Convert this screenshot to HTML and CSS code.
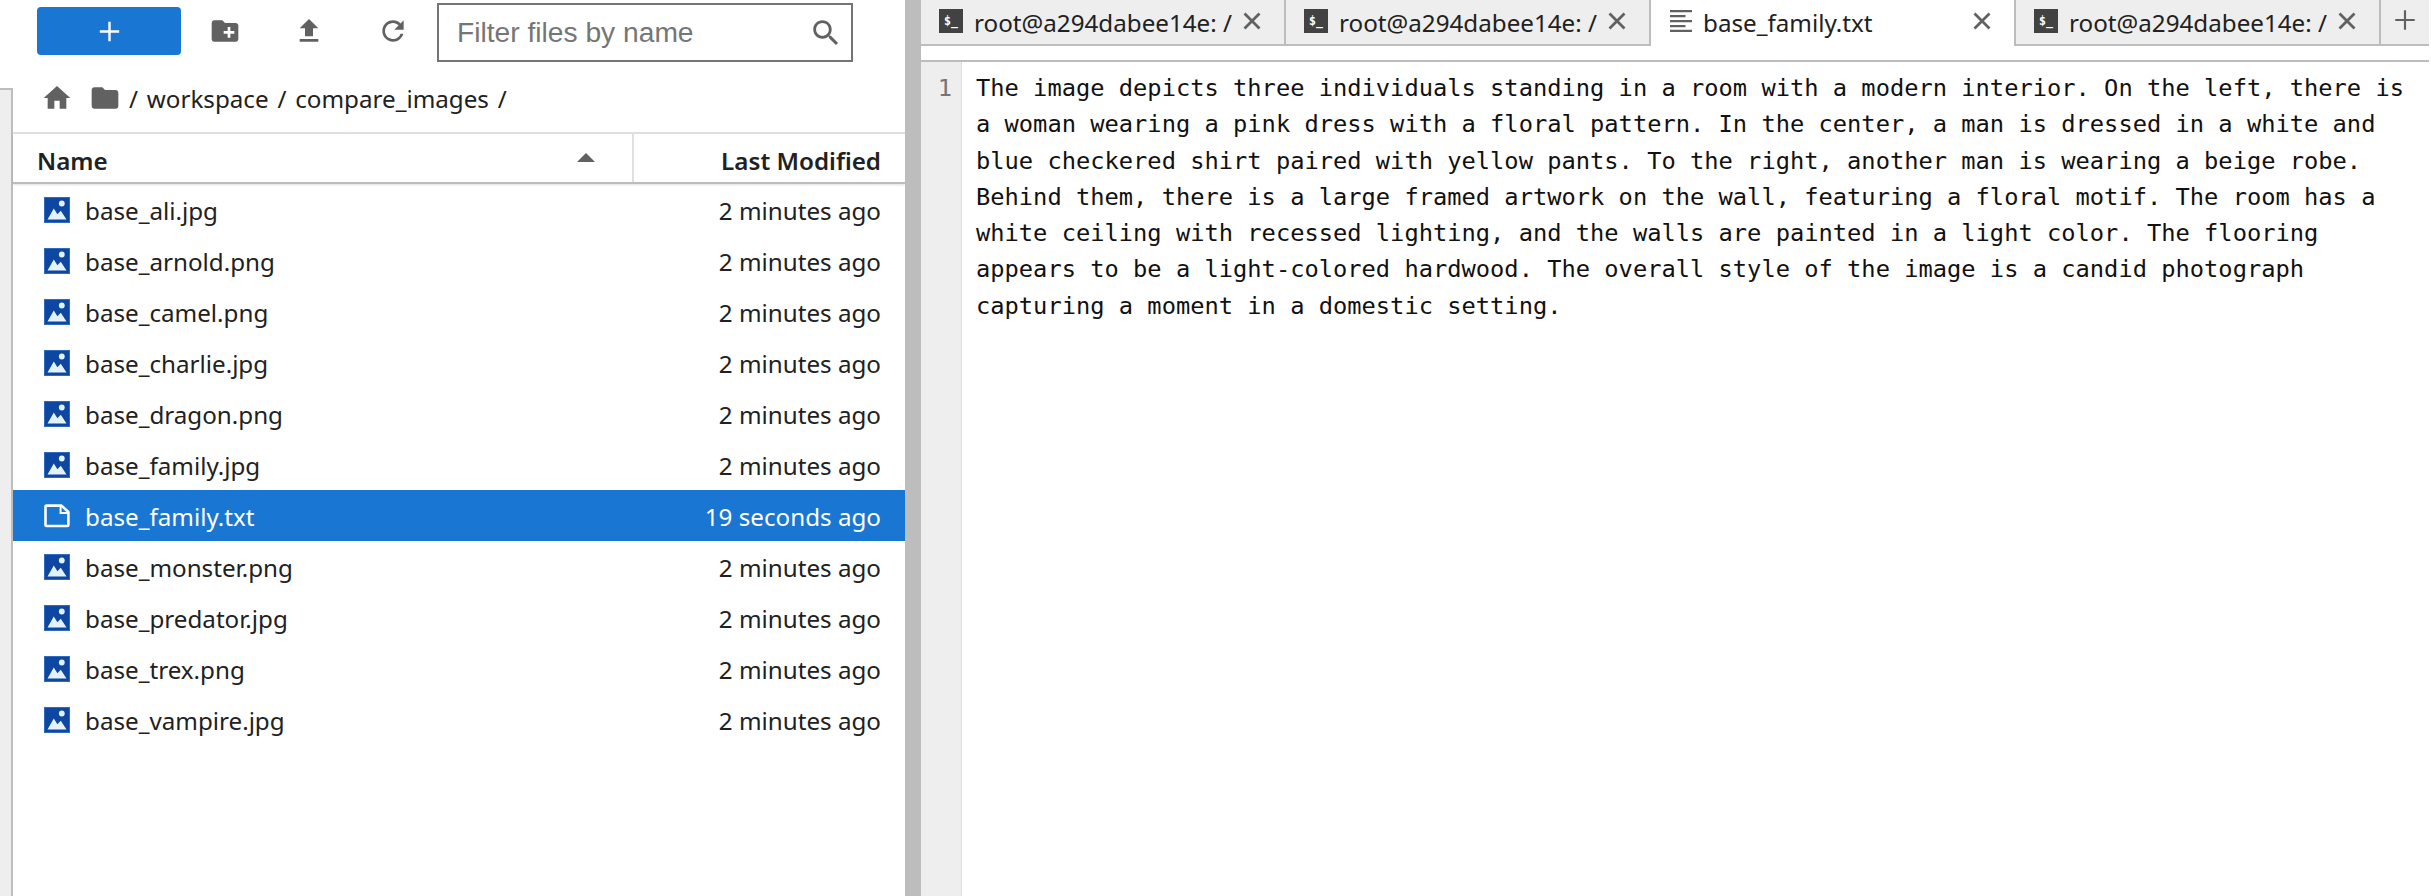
FILE: index.html
```html
<!DOCTYPE html>
<html lang="en">
<head>
  <meta charset="UTF-8" />
  <title>compare_images</title>
  <link rel="stylesheet" href="styles.css">
</head>
<body>
  <svg class="defs" width="0" height="0">
    <symbol id="img-icon" viewBox="0 0 26 26">
      <rect x="0.5" y="0.5" width="25" height="25" fill="#0d47a1" stroke="#2f6cc0"/>
      <circle cx="17.8" cy="6.5" r="2.9" fill="#e3f2fd"/>
      <path fill="#e3f2fd" d="M3.5 22.5 9.8 11.5 13.4 17.2 16.8 13.8 22.5 22.5z"/>
    </symbol>
    <symbol id="close-icon" viewBox="0 0 18 18">
      <path d="M1.5 1.5 16.5 16.5M16.5 1.5 1.5 16.5" stroke="#616161" stroke-width="2.8" fill="none"/>
    </symbol>
  </svg>

  <div class="filebrowser">
    <div class="toolbar">
      <button class="new-btn">
        <svg viewBox="0 0 24 24" width="29" height="29"><path fill="#fff" d="M13 4h-2v7H4v2h7v7h2v-7h7v-2h-7z"/></svg>
      </button>
      <span class="tool"><svg viewBox="0 0 24 24"><path d="M20 6h-8l-2-2H4c-1.11 0-1.99.89-1.99 2L2 18c0 1.11.89 2 2 2h16c1.11 0 2-.89 2-2V8c0-1.11-.89-2-2-2zm-1 8h-3v3h-2v-3h-3v-2h3V9h2v3h3v2z"/></svg></span>
      <span class="tool"><svg viewBox="0 0 24 24"><path d="M9 16h6v-6h4l-7-7-7 7h4zm-4 2h14v2H5z"/></svg></span>
      <span class="tool"><svg viewBox="0 0 24 24"><path d="M17.65 6.35C16.2 4.9 14.21 4 12 4c-4.42 0-7.99 3.58-7.99 8s3.57 8 7.99 8c3.73 0 6.84-2.55 7.73-6h-2.08c-.82 2.33-3.04 4-5.65 4-3.31 0-6-2.69-6-6s2.69-6 6-6c1.66 0 3.14.69 4.22 1.78L13 11h7V4l-2.35 2.35z"/></svg></span>
      <div class="filter">
        <span class="filter-text">Filter files by name</span>
        <svg viewBox="0 0 24 24"><path d="M15.5 14h-.79l-.28-.27C15.41 12.59 16 11.11 16 9.5 16 5.91 13.09 3 9.5 3S3 5.91 3 9.5 5.91 16 9.5 16c1.61 0 3.09-.59 4.23-1.57l.27.28v.79l5 4.99L20.49 19l-4.99-5zm-6 0C7.01 14 5 11.99 5 9.5S7.01 5 9.5 5 14 7.01 14 9.5 11.99 14 9.5 14z"/></svg>
      </div>
    </div>

    <div class="browser-body">
      <div class="side-strip"></div>
      <div class="listing">
        <div class="crumbs">
          <svg viewBox="0 0 24 24"><path d="M10 20v-6h4v6h5v-8h3L12 3 2 12h3v8z"/></svg>
          <svg viewBox="0 0 24 24"><path d="M10 4H4c-1.1 0-1.99.9-1.99 2L2 18c0 1.1.9 2 2 2h16c1.1 0 2-.9 2-2V8c0-1.1-.9-2-2-2h-8l-2-2z"/></svg>
          <span class="crumb-text">/ workspace / compare_images /</span>
        </div>

        <div class="list-header">
          <div class="col-name">
            <span>Name</span>
            <i class="caret"></i>
          </div>
          <div class="col-modified">Last Modified</div>
        </div>

        <div class="row"><svg class="file-icon"><use href="#img-icon"/></svg><span class="name">base_ali.jpg</span><span class="modified">2 minutes ago</span></div>
        <div class="row"><svg class="file-icon"><use href="#img-icon"/></svg><span class="name">base_arnold.png</span><span class="modified">2 minutes ago</span></div>
        <div class="row"><svg class="file-icon"><use href="#img-icon"/></svg><span class="name">base_camel.png</span><span class="modified">2 minutes ago</span></div>
        <div class="row"><svg class="file-icon"><use href="#img-icon"/></svg><span class="name">base_charlie.jpg</span><span class="modified">2 minutes ago</span></div>
        <div class="row"><svg class="file-icon"><use href="#img-icon"/></svg><span class="name">base_dragon.png</span><span class="modified">2 minutes ago</span></div>
        <div class="row"><svg class="file-icon"><use href="#img-icon"/></svg><span class="name">base_family.jpg</span><span class="modified">2 minutes ago</span></div>
        <div class="row selected">
          <svg class="file-icon" viewBox="0 0 26 26"><path fill="none" stroke="#fff" stroke-width="2.6" stroke-linejoin="round" d="M1.5 3.6c0-.6.5-1 1-1h15L24.4 9v13c0 .6-.5 1-1 1H2.5c-.5 0-1-.4-1-1z"/><path fill="none" stroke="#fff" stroke-width="2" d="M16.6 3v7h7.6"/></svg>
          <span class="name">base_family.txt</span><span class="modified">19 seconds ago</span>
        </div>
        <div class="row"><svg class="file-icon"><use href="#img-icon"/></svg><span class="name">base_monster.png</span><span class="modified">2 minutes ago</span></div>
        <div class="row"><svg class="file-icon"><use href="#img-icon"/></svg><span class="name">base_predator.jpg</span><span class="modified">2 minutes ago</span></div>
        <div class="row"><svg class="file-icon"><use href="#img-icon"/></svg><span class="name">base_trex.png</span><span class="modified">2 minutes ago</span></div>
        <div class="row"><svg class="file-icon"><use href="#img-icon"/></svg><span class="name">base_vampire.jpg</span><span class="modified">2 minutes ago</span></div>
      </div>
    </div>
  </div>

  <div class="splitter"></div>

  <div class="main">
    <div class="tabbar">
      <div class="tab"><span class="term-icon">$_</span><span class="tab-label">root@a294dabee14e: /</span><svg class="tab-close"><use href="#close-icon"/></svg></div>
      <div class="tab"><span class="term-icon">$_</span><span class="tab-label">root@a294dabee14e: /</span><svg class="tab-close"><use href="#close-icon"/></svg></div>
      <div class="tab active">
        <svg class="text-icon" viewBox="0 0 22 22"><path fill="#616161" d="M0 0h22v2.2H0zM0 5h15.5v2.2H0zM0 10h22v2.2H0zM0 15h15.5v2.2H0zM0 19.8h22V22H0z"/></svg>
        <span class="tab-label">base_family.txt</span><svg class="tab-close"><use href="#close-icon"/></svg>
      </div>
      <div class="tab"><span class="term-icon">$_</span><span class="tab-label">root@a294dabee14e: /</span><svg class="tab-close"><use href="#close-icon"/></svg></div>
      <div class="tab-add"><svg viewBox="0 0 24 24"><path fill="#616161" d="M13 3h-2v8H3v2h8v8h2v-8h8v-2h-8z"/></svg></div>
    </div>
    <div class="doc-toolbar"></div>
    <div class="editor">
      <div class="gutter">1</div>
      <div class="code">The image depicts three individuals standing in a room with a modern interior. On the left, there is a woman wearing a pink dress with a floral pattern. In the center, a man is dressed in a white and blue checkered shirt paired with yellow pants. To the right, another man is wearing a beige robe. Behind them, there is a large framed artwork on the wall, featuring a floral motif. The room has a white ceiling with recessed lighting, and the walls are painted in a light color. The flooring appears to be a light-colored hardwood. The overall style of the image is a candid photograph capturing a moment in a domestic setting.</div>
    </div>
  </div>
</body>
</html>
```

FILE: styles.css
```css
html, body {
  height: 100%;
}

body {
  margin: 0;
  display: flex;
  overflow: hidden;
  background: #fff;
  color: #212121;
  font-family: "Noto Sans", "Open Sans", sans-serif;
  font-size: 24.2px;
}

.defs {
  position: absolute;
}

/* left side */
.filebrowser {
  width: 905px;
  flex-shrink: 0;
  display: flex;
  flex-direction: column;
}

.toolbar {
  height: 88px;
  flex-shrink: 0;
  display: flex;
  align-items: flex-start;
  padding-left: 37px;
  box-sizing: border-box;
}

.new-btn {
  width: 144px;
  height: 48px;
  margin: 7px 2px 0 0;
  border: 0;
  border-radius: 4px;
  background: #1976d2;
  display: flex;
  align-items: center;
  justify-content: center;
  padding: 0;
}

.tool {
  width: 84px;
  height: 62px;
  display: flex;
  align-items: center;
  justify-content: center;
}

.tool svg {
  width: 32px;
  height: 32px;
  fill: #616161;
}

.filter {
  width: 416px;
  height: 59px;
  margin: 3px 0 0 2px;
  border: 2px solid #757575;
  box-sizing: border-box;
  display: flex;
  align-items: center;
  justify-content: space-between;
  padding: 0 8px 0 18px;
}

.filter-text {
  font-family: "Liberation Sans", sans-serif;
  font-size: 28.2px;
  color: #757575;
}

.filter svg {
  width: 34px;
  height: 34px;
  fill: #616161;
}

.browser-body {
  flex: 1;
  display: flex;
  min-height: 0;
}

.side-strip {
  width: 11px;
  background: #eee;
  border-top: 2px solid #bdbdbd;
  border-right: 2px solid #bdbdbd;
}

.listing {
  flex: 1;
}

.crumbs {
  height: 46px;
  box-sizing: border-box;
  display: flex;
  align-items: center;
  padding: 0 0 24px 28px;
  border-bottom: 2px solid #e0e0e0;
}

.crumbs svg {
  width: 32px;
  height: 32px;
  flex-shrink: 0;
  fill: #616161;
  margin-right: 16px;
}

.crumb-text {
  margin-left: -8px;
  word-spacing: 2.5px;
}

.list-header {
  height: 48px;
  display: flex;
  border-bottom: 2px solid #bdbdbd;
  font-weight: 600;
  box-shadow: 0 1px 2px rgba(0, 0, 0, 0.12);
}

.col-name {
  flex: 1;
  display: flex;
  align-items: center;
  justify-content: space-between;
  padding: 5px 37px 0 24px;
}

.col-modified {
  width: 273px;
  box-sizing: border-box;
  border-left: 2px solid #e0e0e0;
  padding: 5px 24px 0 0;
  display: flex;
  align-items: center;
  justify-content: flex-end;
}

.caret {
  border-left: 9px solid transparent;
  border-right: 9px solid transparent;
  border-bottom: 9px solid #616161;
  margin-bottom: 6px;
}

.row {
  height: 51px;
  display: flex;
  align-items: center;
  padding: 0 24px 0 31px;
}

.row.selected {
  background: #1976d2;
  color: #fff;
}

.file-icon {
  width: 26px;
  height: 26px;
  margin-right: 15px;
  flex-shrink: 0;
}

.name {
  flex: 1;
  padding-top: 2px;
}

.modified {
  padding-top: 2px;
}

.splitter {
  width: 16px;
  flex-shrink: 0;
  background: #bdbdbd;
}

/* right side */
.main {
  flex: 1;
  min-width: 0;
  display: flex;
  flex-direction: column;
  padding-right: 2px;
}

.tabbar {
  height: 46px;
  flex-shrink: 0;
  display: flex;
  background: #eee;
  box-sizing: border-box;
  border-bottom: 2px solid #bdbdbd;
}

.tab {
  width: 365px;
  height: 46px;
  box-sizing: border-box;
  flex-shrink: 0;
  display: flex;
  align-items: center;
  padding: 0 24px 2px 18px;
  border-right: 2px solid #bdbdbd;
}

.tab.active {
  background: #fff;
  padding-left: 19px;
}

.term-icon {
  width: 24px;
  height: 24px;
  margin: 0 11px 3px 0;
  flex-shrink: 0;
  background: #424242;
  color: #fff;
  font-family: "DejaVu Sans Mono", monospace;
  font-size: 11.5px;
  font-weight: bold;
  line-height: 24px;
  text-align: center;
}

.text-icon {
  width: 22px;
  height: 22px;
  margin: 0 11px 2px 0;
  flex-shrink: 0;
}

.tab-label {
  white-space: nowrap;
}

.tab-close {
  width: 18px;
  height: 18px;
  margin: 0 -1px 3px auto;
  flex-shrink: 0;
}

.tab-add {
  flex: 1;
  display: flex;
  align-items: center;
  justify-content: center;
  padding-bottom: 4px;
}

.tab-add svg {
  width: 26px;
  height: 26px;
}

.doc-toolbar {
  height: 14px;
  flex-shrink: 0;
  border-bottom: 2px solid #bdbdbd;
}

.editor {
  flex: 1;
  display: flex;
  min-height: 0;
}

.gutter {
  width: 41px;
  flex-shrink: 0;
  box-sizing: border-box;
  background: #eee;
  border-right: 1px solid #ddd;
  padding: 8px 9px 0 0;
  text-align: right;
  color: #757575;
  font-family: "DejaVu Sans Mono", monospace;
  font-size: 23.73px;
  line-height: 36.3px;
}

.code {
  flex: 1;
  padding: 8px 4px 0 14px;
  font-family: "DejaVu Sans Mono", monospace;
  font-size: 23.73px;
  line-height: 36.3px;
  color: #111;
}
```
